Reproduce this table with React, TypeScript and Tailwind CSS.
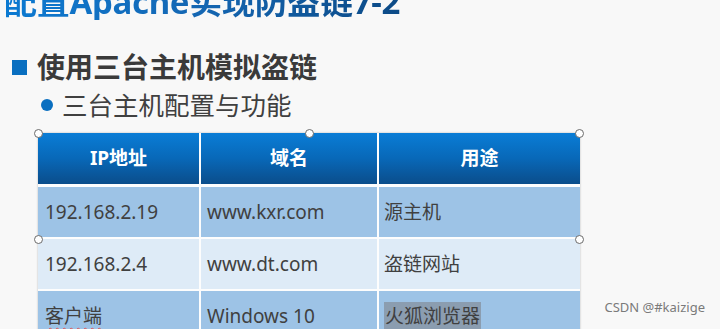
import React from 'react';

const rows = [
  { ip: '192.168.2.19', domain: 'www.kxr.com', use: '源主机', tone: 'dark' },
  { ip: '192.168.2.4', domain: 'www.dt.com', use: '盗链网站', tone: 'light' },
  { ip: '客户端', domain: 'Windows 10', use: '火狐浏览器', tone: 'dark' },
];

function Handle({ className }: { className: string }) {
  return (
    <span
      className={`absolute w-[9px] h-[9px] rounded-full bg-white border-[1.5px] border-[#6b6b6b] ${className}`}
    />
  );
}

export default function App() {
  return (
    <div
      className="relative w-[720px] h-[329px] overflow-hidden bg-[#f8f8f8]"
      style={{ fontFamily: '"Noto Sans", "Noto Sans CJK SC", sans-serif' }}
    >
      {/* Slide title, cut off at the top */}
      <h1 className="mt-[-16px] ml-[4px] text-[33px] leading-[36px] font-bold whitespace-nowrap tracking-[-0.3px] bg-gradient-to-r from-[#0b7ad2] via-[#1466b2] to-[#0c4a86] bg-clip-text text-transparent w-fit">
        配置Apache实现防盗链7-2
      </h1>

      {/* Bullets */}
      <div className="mt-[31px] ml-[12px] flex items-center gap-[10px]">
        <span className="w-[15px] h-[15px] bg-[#0a6fc0]" />
        <span className="text-[28px] leading-[32px] font-bold text-[#3a3a3a]">使用三台主机模拟盗链</span>
      </div>
      <div className="mt-[7px] ml-[41px] flex items-center gap-[9px]">
        <span className="w-[12px] h-[12px] rounded-full bg-[#0a6fc0]" />
        <span className="text-[25.5px] leading-[30px] text-[#404040]">三台主机配置与功能</span>
      </div>

      {/* Table */}
      <div className="relative mt-[13px] ml-[38px] w-[542px]">
        <div className="grid grid-cols-[161px_176px_201px] gap-x-[2px] bg-[#fdfdfd] shadow-[0_0_2px_rgba(0,0,0,0.25)]">
          {['IP地址', '域名', '用途'].map((h) => (
            <div
              key={h}
              className="h-[51px] flex items-center justify-center bg-gradient-to-b from-[#0a7dd6] via-[#0868b8] to-[#0a4d8b] text-white text-[19px] font-bold"
            >
              {h}
            </div>
          ))}
          {rows.map((r, i) => {
            const bg = r.tone === 'dark' ? 'bg-[#9dc3e6]' : 'bg-[#deebf7]';
            const top = i === 0 ? 'mt-[3px]' : 'mt-[2px]';
            return (
              <React.Fragment key={r.ip}>
                <div className={`${bg} ${top} h-[50px] flex items-center pl-[7px] text-[19px] text-[#404040]`}>
                  <span className={i === 2 ? 'underline decoration-wavy decoration-[#e05555] decoration-1 underline-offset-[4px]' : ''}>
                    {r.ip}
                  </span>
                </div>
                <div className={`${bg} ${top} h-[50px] flex items-center pl-[6px] text-[19px] text-[#404040]`}>{r.domain}</div>
                <div className={`${bg} ${top} h-[50px] flex items-center pl-[5px] text-[19px] text-[#404040]`}>
                  <span className={i === 2 ? 'bg-[#8b9db0] px-[1px]' : ''}>{r.use}</span>
                </div>
              </React.Fragment>
            );
          })}
        </div>

        {/* Selection handles */}
        <Handle className="left-[-4px] top-[-4px]" />
        <Handle className="left-[267px] top-[-4px]" />
        <Handle className="right-[-4px] top-[-4px]" />
        <Handle className="left-[-4px] top-[102px]" />
        <Handle className="right-[-4px] top-[102px]" />
      </div>

      <span className="absolute right-[15px] bottom-[12px] text-[13px] text-[#7a7a7a]">CSDN @#kaizige</span>
    </div>
  );
}
